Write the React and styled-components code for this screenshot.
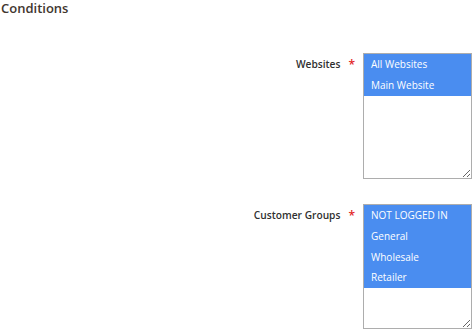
import React from 'react'
import styled, { createGlobalStyle } from 'styled-components'

const GlobalStyle = createGlobalStyle`
    body {
        margin: 0;
        background: #fff;
        font-family: "Open Sans", "Liberation Sans", sans-serif;
    }
`

const Page = styled.div`
    width: 474px;
    height: 334px;
    padding: 0 2px 0 1px;
    box-sizing: border-box;
    overflow: hidden;
`

const Title = styled.div`
    font-size: 13px;
    font-weight: 600;
    color: #41362f;
    line-height: 17px;
    margin: 0 0 36px;
`

const Row = styled.div`
    display: grid;
    grid-template-columns: 1fr 109px;
    column-gap: 8px;
    margin-bottom: 25px;
`

const Label = styled.div`
    display: flex;
    justify-content: flex-end;
    align-items: center;
    height: 22px;
    font-size: 10.2px;
    font-weight: 600;
    color: #303030;
`

const Required = styled.span`
    color: #e22626;
    font-size: 12px;
    margin-left: 8px;
`

const Select = styled.div`
    height: ${p => p.height}px;
    border: 1px solid #adadad;
    box-sizing: border-box;
    resize: vertical;
    overflow: auto;
    background: #fff;
`

const Option = styled.div`
    height: 20.75px;
    line-height: 20.75px;
    padding: 0 7px;
    font-size: 10px;
    color: #fff;
    background: #4a8df0;
    white-space: nowrap;
`

const fields = [
    { label: 'Websites', height: 126, options: ['All Websites', 'Main Website'] },
    { label: 'Customer Groups', height: 125, options: ['NOT LOGGED IN', 'General', 'Wholesale', 'Retailer'] },
]

const App = () => {
    return (
        <Page>
            <GlobalStyle />
            <Title>Conditions</Title>
            {fields.map(f => (
                <Row key={f.label}>
                    <Label>
                        {f.label}
                        <Required>*</Required>
                    </Label>
                    <Select height={f.height}>
                        {f.options.map(o => (
                            <Option key={o}>{o}</Option>
                        ))}
                    </Select>
                </Row>
            ))}
        </Page>
    )
}

export default App
